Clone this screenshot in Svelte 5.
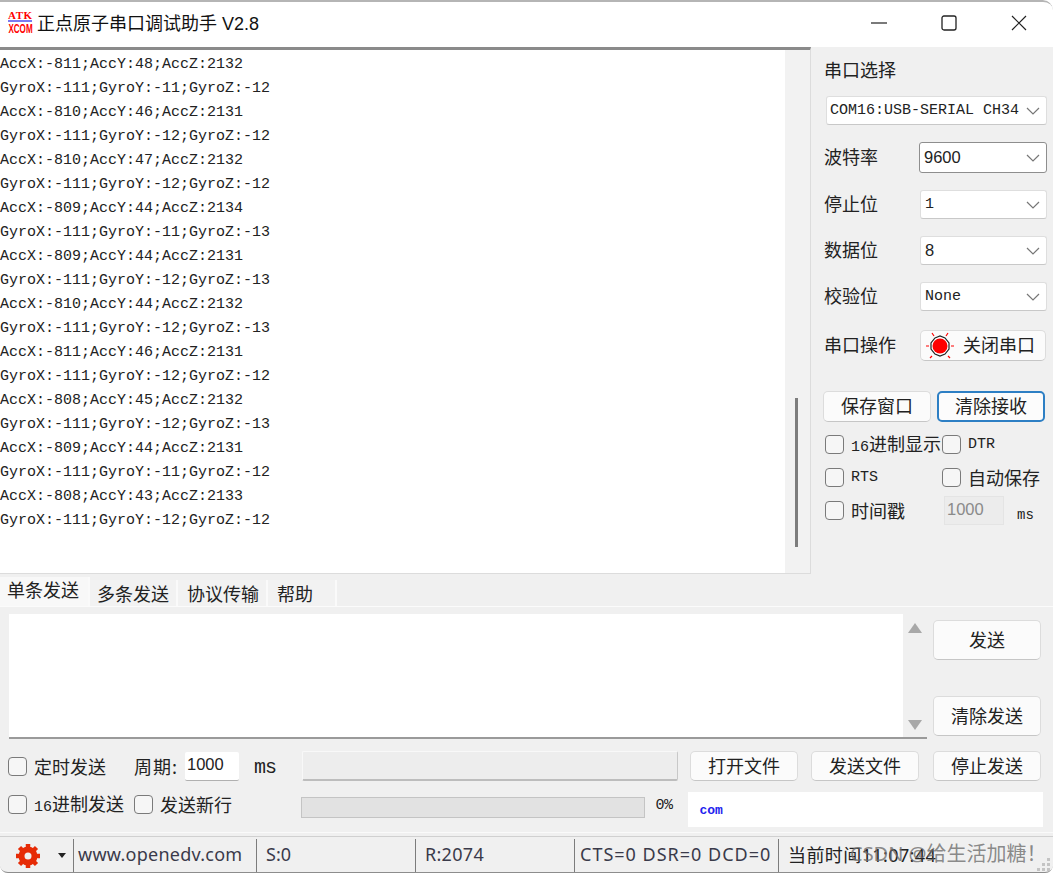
<script>
  const log = [
    "AccX:-811;AccY:48;AccZ:2132",
    "GyroX:-111;GyroY:-11;GyroZ:-12",
    "AccX:-810;AccY:46;AccZ:2131",
    "GyroX:-111;GyroY:-12;GyroZ:-12",
    "AccX:-810;AccY:47;AccZ:2132",
    "GyroX:-111;GyroY:-12;GyroZ:-12",
    "AccX:-809;AccY:44;AccZ:2134",
    "GyroX:-111;GyroY:-11;GyroZ:-13",
    "AccX:-809;AccY:44;AccZ:2131",
    "GyroX:-111;GyroY:-12;GyroZ:-13",
    "AccX:-810;AccY:44;AccZ:2132",
    "GyroX:-111;GyroY:-12;GyroZ:-13",
    "AccX:-811;AccY:46;AccZ:2131",
    "GyroX:-111;GyroY:-12;GyroZ:-12",
    "AccX:-808;AccY:45;AccZ:2132",
    "GyroX:-111;GyroY:-12;GyroZ:-13",
    "AccX:-809;AccY:44;AccZ:2131",
    "GyroX:-111;GyroY:-11;GyroZ:-12",
    "AccX:-808;AccY:43;AccZ:2133",
    "GyroX:-111;GyroY:-12;GyroZ:-12",
  ];
  const selects = [
    { label: "波特率", value: "9600", cls: "focus sans" },
    { label: "停止位", value: "1", cls: "mono" },
    { label: "数据位", value: "8", cls: "sans" },
    { label: "校验位", value: "None", cls: "mono" },
  ];
  const tabs = ["单条发送", "多条发送", "协议传输", "帮助"];
</script>

{#snippet chevron()}
  <svg class="chev" viewBox="0 0 14 8" width="14" height="8"><path d="M1 1l6 6 6-6" fill="none" stroke="#777" stroke-width="1.2" /></svg>
{/snippet}

<div class="win">
  <header class="title">
    <div class="logo"><span>ATK</span><span>XCOM</span></div>
    <div class="title-text">正点原子串口调试助手 V2.8</div>
    <div class="controls">
      <svg viewBox="0 0 16 16" width="16" height="16"><path d="M0 8h16" stroke="#222" stroke-width="1.2" /></svg>
      <svg viewBox="0 0 16 16" width="16" height="16"><rect x="1" y="1" width="14" height="14" rx="2" fill="none" stroke="#222" stroke-width="1.3" /></svg>
      <svg viewBox="0 0 16 16" width="16" height="16"><path d="M1 1l14 14M15 1L1 15" stroke="#222" stroke-width="1.2" /></svg>
    </div>
  </header>

  <div class="main">
    <div class="log-wrap">
      <div class="log">
        {#each log as line}
          <div>{line}</div>
        {/each}
      </div>
      <div class="vscroll"><div class="thumb"></div></div>
    </div>

    <aside class="side">
      <div class="side-title">串口选择</div>
      <div class="select wide mono">COM16:USB-SERIAL CH34{@render chevron()}</div>
      <div class="rows">
        {#each selects as s}
          <div class="row">
            <span class="cn">{s.label}</span>
            <div class="select {s.cls}">{s.value}{@render chevron()}</div>
          </div>
        {/each}
        <div class="row op">
          <span class="cn">串口操作</span>
          <button class="btn open">
            <svg viewBox="0 0 28 28" width="28" height="28">
              <path d="M9 6l5-2 5 2 4 5v6l-4 5-5 2-5-2-4-5v-6z" fill="#fff" stroke="#222" stroke-width="1.2" />
              <circle cx="14" cy="14" r="7.500" fill="#f00" />
              <path d="M6 1l2 3M22 1l-2 3M0 14h3M25 14h3M4 26l2-2M24 26l-2-2" stroke="#f00" stroke-width="1.2" />
            </svg>
            关闭串口
          </button>
        </div>
      </div>
      <div class="pair">
        <button class="btn">保存窗口</button>
        <button class="btn active">清除接收</button>
      </div>
      <div class="checks">
        <label class="chk"><i></i><span><span class="num">16</span>进制显示</span></label>
        <label class="chk"><i></i><span class="mono-t">DTR</span></label>
        <label class="chk"><i></i><span class="mono-t">RTS</span></label>
        <label class="chk"><i></i>自动保存</label>
        <label class="chk"><i></i>时间戳</label>
        <div class="stamp"><span class="stamp-in">1000</span><span class="ms">ms</span></div>
      </div>
    </aside>
  </div>

  <div class="tabs">
    {#each tabs as t, i}
      <div class="tab" class:on={i === 0}>{t}</div>
    {/each}
  </div>

  <section class="send">
    <div class="send-top">
      <div class="input-area">
        <div class="input-bar">
          <svg viewBox="0 0 14 10" width="14" height="10"><path d="M7 0l7 10H0z" fill="#a8a8a8" /></svg>
          <svg viewBox="0 0 14 10" width="14" height="10"><path d="M7 10L0 0h14z" fill="#a8a8a8" /></svg>
        </div>
      </div>
      <div class="send-btns">
        <button class="btn tall">发送</button>
        <button class="btn tall">清除发送</button>
      </div>
    </div>
    <div class="send-row one">
      <label class="chk"><i></i>定时发送</label>
      <span class="period">周期:</span>
      <span class="period-in">1000</span>
      <span class="ms big">ms</span>
      <div class="path"></div>
      <button class="btn small">打开文件</button>
      <button class="btn small">发送文件</button>
      <button class="btn small">停止发送</button>
    </div>
    <div class="send-row two">
      <label class="chk"><i></i><span><span class="num">16</span>进制发送</span></label>
      <label class="chk"><i></i>发送新行</label>
      <div class="progress"></div>
      <span class="pct">0%</span>
      <div class="link">com</div>
    </div>
  </section>

  <footer class="status">
    <div class="cell gear">
      <svg viewBox="0 0 26 26" width="26" height="26">
        <path d="M13 7a6 6 0 1 0 0 12 6 6 0 0 0 0-12z" fill="none" stroke="#e62b06" stroke-width="7" />
        <path d="M13 13V1M13 13v12M13 13H1M13 13h12M13 13L4.500 4.500M13 13l8.500 8.500M13 13l8.500-8.500M13 13l-8.500 8.500" stroke="#e62b06" stroke-width="4.500" />
        <circle cx="13" cy="13" r="3.500" fill="#f0f0f0" />
      </svg>
      <span class="caret"></span>
    </div>
    <div class="cell c-web">www.openedv.com</div>
    <div class="cell c-s">S:0</div>
    <div class="cell c-r">R:2074</div>
    <div class="cell c-cts">CTS=0 DSR=0 DCD=0</div>
    <div class="cell c-time">当前时间11:07:44</div>
    <div class="mark">CSDN @给生活加糖！</div>
    <svg class="grip" viewBox="0 0 15 15" width="15" height="15">
      <path d="M11 2h3v3h-3zM6 7h3v3H6zM11 7h3v3h-3zM1 12h3v3H1zM6 12h3v3H6zM11 12h3v3h-3z" fill="#c4c4c4" />
    </svg>
  </footer>
</div>

<style>
  :global(body) {
    margin: 0;
    background: #fff;
  }
  .win {
    width: 1053px;
    height: 873px;
    display: flex;
    flex-direction: column;
    position: relative;
    overflow: hidden;
    background: #f0f0f0;
    font-family: "Noto Sans CJK SC", "Liberation Sans", sans-serif;
    font-size: 18px;
    color: #222;
    border-radius: 0 10px 8px 8px;
    box-sizing: border-box;
  }
  .title {
    height: 47px;
    box-sizing: border-box;
    display: flex;
    align-items: center;
    background: #fff;
    border-top: 2px solid #b5b5b5;
    padding-left: 8px;
    border-radius: 0 10px 0 0;
    flex: none;
  }
  .logo {
    width: 24px;
    display: flex;
    flex-direction: column;
    align-items: center;
    color: #f00;
    font: bold 11px/10px "Liberation Serif", serif;
    margin-top: -5px;
  }
  .logo span:first-child {
    border-bottom: 2px solid #7a7af0;
    width: 24px;
    text-align: center;
    letter-spacing: 0.5px;
  }
  .logo span:last-child {
    font: bold 13px/13px "Liberation Sans", sans-serif;
    transform: scaleX(0.62);
  }
  .title-text {
    margin-left: 5px;
    font-size: 18px;
    color: #111;
    font-family: "Liberation Sans", "Noto Sans CJK SC", sans-serif;
    margin-top: -5px;
  }
  .controls {
    margin-left: auto;
    display: flex;
    gap: 54px;
    padding-right: 26px;
    margin-top: -3px;
  }
  .main {
    height: 531px;
    flex: none;
    display: flex;
  }
  .log-wrap {
    width: 812px;
    height: 527px;
    box-sizing: border-box;
    display: flex;
    background: #fff;
    border-top: 3px solid #8a8a8a;
    border-right: 1px solid #dcdcdc;
    border-bottom: 1px solid #dcdcdc;
  }
  .log {
    flex: 1;
    padding-top: 3px;
    font: 15px/24px "Liberation Mono", monospace;
    color: #222;
    white-space: pre;
  }
  .vscroll {
    width: 25px;
    background: #f2f2f2;
    position: relative;
  }
  .thumb {
    position: absolute;
    left: 10px;
    top: 348px;
    width: 3px;
    height: 149px;
    background: #7d7d7d;
  }
  .side {
    flex: 1;
    padding: 9px 6px 0 13px;
  }
  .side-title {
    height: 26px;
    line-height: 26px;
    margin-bottom: 14px;
  }
  .cn {
    padding-bottom: 4px;
  }
  .select {
    height: 29px;
    width: 127px;
    box-sizing: border-box;
    background: #fff;
    border: 1px solid #dedede;
    border-bottom-color: #c8c8c8;
    border-radius: 3px;
    display: flex;
    align-items: center;
    justify-content: space-between;
    padding: 0 5px 0 4px;
    font-family: "Liberation Sans", sans-serif;
    font-size: 16.500px;
    color: #222;
  }
  .mono {
    font-family: "Liberation Mono", monospace;
    font-size: 15px;
  }
  .sans {
    font-family: "Liberation Sans", sans-serif;
  }
  .focus {
    height: 31px;
    border-color: #8e8e8e;
    width: 128px;
  }
  .wide {
    width: 221px;
    margin-left: 2px;
    padding-left: 3px;
    white-space: nowrap;
    overflow: hidden;
  }
  .chev {
    flex: none;
    margin-left: 4px;
    margin-right: 1px;
  }
  .rows {
    margin-top: 17px;
    display: flex;
    flex-direction: column;
    gap: 17px;
  }
  .row {
    display: flex;
    align-items: center;
    justify-content: space-between;
    height: 29px;
  }
  .row:first-child {
    height: 31px;
  }
  .row.op {
    height: 31px;
    margin-top: 2px;
  }
  .btn {
    font-family: "Noto Sans CJK SC", sans-serif;
    font-size: 18px;
    color: #222;
    background: #fbfbfb;
    border: 1px solid #dcdcdc;
    border-bottom-color: #c6c6c6;
    border-radius: 5px;
    box-sizing: border-box;
    padding: 0 0 3px;
    line-height: 1;
  }
  .open {
    width: 126px;
    height: 31px;
    display: flex;
    align-items: center;
    gap: 9px;
    padding-left: 5px;
    flex: none;
    margin-right: 1px;
  }
  .open svg {
    margin-top: 3px;
  }
  .pair {
    margin-top: 30px;
    margin-left: -1px;
    display: flex;
    gap: 6px;
  }
  .pair .btn {
    width: 108px;
    height: 31px;
  }
  .pair .active {
    border: 2px solid #2d7fc4;
    background: #fcfcfc;
  }
  .checks {
    margin-top: 13px;
    display: grid;
    grid-template-columns: 117px 1fr;
    row-gap: 14px;
    margin-left: 1px;
  }
  .chk {
    display: flex;
    align-items: center;
    gap: 7px;
    height: 19px;
    white-space: nowrap;
    line-height: 19px;
  }
  .chk i {
    width: 19px;
    height: 19px;
    flex: none;
    box-sizing: border-box;
    border: 1.500px solid #7a7a7a;
    border-radius: 4px;
    background: #f6f6f6;
  }
  .num {
    font: 15px "Liberation Mono", monospace;
  }
  .mono-t {
    font: 15px "Liberation Mono", monospace;
  }
  .stamp {
    display: flex;
    align-items: center;
    margin-left: 2px;
    height: 19px;
  }
  .stamp-in {
    width: 60px;
    height: 29px;
    box-sizing: border-box;
    background: #ececec;
    border: 1px solid #e4e4e4;
    color: #8a8a8a;
    font: 16.500px/24px "Liberation Sans", sans-serif;
    padding-left: 2px;
  }
  .ms {
    font: 14px "Liberation Mono", monospace;
    margin: 9px 0 0 13px;
  }
  .tabs {
    display: flex;
    height: 28px;
    flex: none;
    align-items: flex-end;
  }
  .tab {
    height: 26px;
    line-height: 26px;
    background: #f2f2f2;
    border-right: 2px solid #fafafa;
  }
  .tab:nth-child(2) {
    padding: 0 7px 0 7px;
  }
  .tab:nth-child(3) {
    padding: 0 7px 0 9px;
  }
  .tab:nth-child(4) {
    padding: 0 22px 0 9px;
  }
  .tab.on {
    height: 29px;
    line-height: 25px;
    background: #f8f8f8;
    padding: 0 9px 0 7px;
  }
  .send {
    height: 227px;
    flex: none;
    box-sizing: border-box;
    border-top: 1px solid #fbfbfb;
    border-bottom: 1px solid #fafafa;
    padding: 7px 10px 0 8px;
  }
  .send-top {
    display: flex;
    height: 125px;
  }
  .input-area {
    width: 918px;
    margin-left: 1px;
    box-sizing: border-box;
    background: #fff;
    border-bottom: 2px solid #9a9a9a;
    display: flex;
    justify-content: flex-end;
  }
  .input-bar {
    width: 24px;
    background: #f0f0f0;
    display: flex;
    flex-direction: column;
    justify-content: space-between;
    align-items: center;
    padding: 9px 0 7px;
    box-sizing: border-box;
  }
  .send-btns {
    margin-left: 6px;
    padding: 6px 0 3px;
    display: flex;
    flex-direction: column;
    justify-content: space-between;
  }
  .tall {
    width: 108px;
    height: 40px;
  }
  .send-row {
    display: flex;
    align-items: center;
  }
  .send-row.one {
    margin-top: 12px;
    height: 30px;
  }
  .period {
    margin-left: 28px;
    letter-spacing: 1px;
  }
  .period-in {
    margin-left: 7px;
    width: 54px;
    height: 29px;
    box-sizing: border-box;
    background: #fff;
    border-bottom: 1px solid #b0b0b0;
    border-radius: 2px;
    font: 16.500px/24px "Liberation Sans", sans-serif;
    padding-left: 2px;
  }
  .ms.big {
    font-size: 20px;
    margin: 3px 0 0 15px;
    width: 47px;
    letter-spacing: -1px;
  }
  .path {
    width: 376px;
    height: 30px;
    margin-left: 1px;
    box-sizing: border-box;
    background: #ededed;
    border: 1px solid #f8f8f8;
    border-bottom: 2px solid #bdbdbd;
    border-right-color: #c8c8c8;
    border-radius: 2px;
  }
  .small {
    width: 108px;
    height: 30px;
  }
  .small:nth-of-type(1) {
    margin-left: 12px;
  }
  .small:nth-of-type(2) {
    margin-left: 13px;
  }
  .small:nth-of-type(3) {
    margin-left: 14px;
  }
  .send-row.two {
    margin-top: 11px;
    height: 35px;
    align-items: flex-start;
  }
  .two .chk {
    margin-top: 3px;
  }
  .two .chk:nth-child(2) {
    margin-left: 10px;
  }
  .progress {
    margin-left: 69px;
    margin-top: 5px;
    width: 344px;
    height: 21px;
    box-sizing: border-box;
    background: #e2e2e2;
    border: 1px solid #c4c4c4;
  }
  .pct {
    font: 15px/20px "Liberation Mono", monospace;
    margin: 4px 0 0 11px;
    width: 33px;
    letter-spacing: -0.6px;
  }
  .link {
    width: 355px;
    height: 35px;
    background: #fff;
    box-sizing: border-box;
    padding-left: 11px;
    color: #2222ee;
    font: bold 13px/38px "Liberation Mono", monospace;
  }
  .status {
    flex: 1;
    display: flex;
    position: relative;
    align-items: stretch;
    box-sizing: border-box;
    border-top: 1px solid #d0d0d0;
    margin-top: 3px;
    border-bottom: 2px solid #8d8d8d;
    border-radius: 0 0 8px 8px;
    font-family: "Noto Sans", "Noto Sans CJK SC", sans-serif;
    font-size: 18px;
    color: #3a3a4a;
  }
  .cell {
    display: flex;
    align-items: center;
    box-sizing: border-box;
    height: 33px;
    margin-top: 2px;
    padding: 0 0 3px 9px;
    border-right: 1px solid #7c7c7c;
    white-space: nowrap;
  }
  .gear {
    width: 74px;
    padding: 0 0 0 15px;
  }
  .caret {
    margin-left: 17px;
    border: 4px solid transparent;
    border-top: 5px solid #222;
    border-bottom: 0;
  }
  .c-web {
    width: 183px;
    padding-left: 4px;
    letter-spacing: 0.25px;
  }
  .c-s {
    width: 159px;
  }
  .c-r {
    width: 159px;
    letter-spacing: 0.3px;
  }
  .c-cts {
    width: 204px;
    padding-left: 5px;
    letter-spacing: 1px;
  }
  .c-time {
    border-right: 0;
    color: #222;
    letter-spacing: 0.4px;
  }
  .mark {
    position: absolute;
    left: 850px;
    top: 3px;
    color: rgba(110, 110, 110, 0.8);
    font-size: 20px;
    line-height: 28px;
    white-space: nowrap;
  }
  .grip {
    position: absolute;
    right: 2px;
    bottom: 1px;
  }
</style>
